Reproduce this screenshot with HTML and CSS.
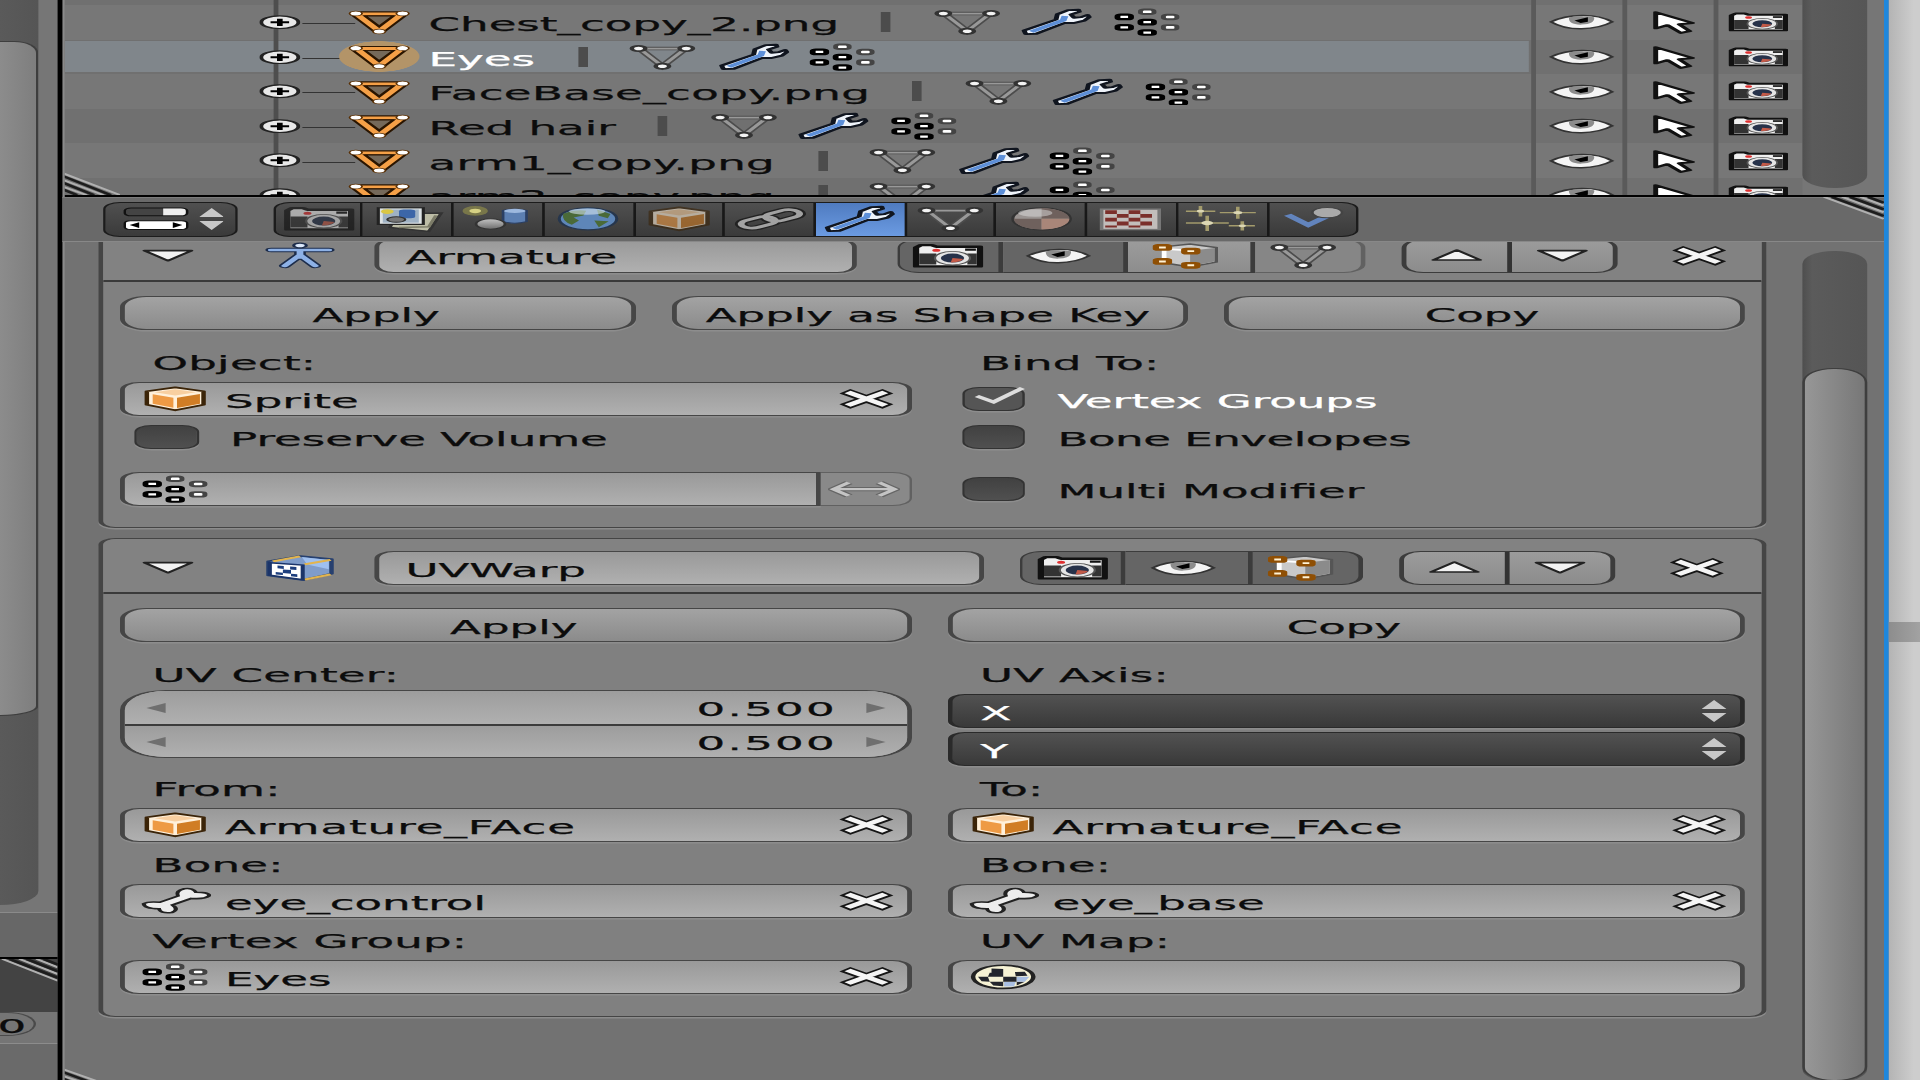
FILE: index.html
```html
<!DOCTYPE html>
<html lang="en">
<head>
    <meta charset="UTF-8">
    <meta name="viewport" content="width=device-width, initial-scale=1.0">
    <title>Modifiers</title>
    <link rel="stylesheet" href="styles.css">
</head>
<body>
    <!-- Icon set -->
    <svg class="icon-defs" width="0" height="0">
        <defs>
            <linearGradient id="ballGrey" x1="0" y1="0" x2="0" y2="1">
                <stop offset="0" stop-color="#c4c4c4"/>
                <stop offset="1" stop-color="#6c6c6c"/>
            </linearGradient>
        </defs>
        <symbol id="plus" viewBox="0 0 16 16" preserveAspectRatio="none">
            <ellipse cx="8" cy="8" rx="7.2" ry="7" fill="#e8e8e8" stroke="#222" stroke-width="1.5"/>
            <path d="M4.4 8H11.6M8 4V12" stroke="#000" stroke-width="2.2"/>
        </symbol>
        <symbol id="mesh" viewBox="0 0 16 16" preserveAspectRatio="none">
            <path d="M2.9 3.4H13.1L8 13.4Z" fill="none" stroke="#2a1500" stroke-width="3" stroke-linejoin="round"/>
            <path d="M2.9 3.4H13.1L8 13.4Z" fill="none" stroke="#f5a047" stroke-width="1.6"/>
            <path d="M5 4.6H11L8 10.4Z" fill="#75695a" stroke="#2a1500" stroke-width=".5"/>
            <g fill="#fff" stroke="#5a3005" stroke-width=".4"><circle cx="2.8" cy="3.2" r="1.4"/><circle cx="13.2" cy="3.2" r="1.4"/><circle cx="8" cy="13.6" r="1.4"/></g>
        </symbol>
        <symbol id="mesh-data" viewBox="0 0 16 16" preserveAspectRatio="none">
            <path d="M2.9 3.2H13.1L8 13.4Z" fill="none" stroke="#4c4c4c" stroke-width="2.1"/>
            <path d="M2.9 3.2H13.1L8 13.4Z" fill="none" stroke="#999" stroke-width="1"/>
            <g fill="#f4f4f4" stroke="#333" stroke-width="1"><circle cx="2.7" cy="3.2" r="1.5"/><circle cx="13.3" cy="3.2" r="1.5"/><circle cx="8" cy="13.4" r="1.5"/></g>
        </symbol>
        <symbol id="wrench" viewBox="0 0 16 16" preserveAspectRatio="none">
            <path d="M.9 13 8 6.7 8.3 3.6 10.7 1.2 13 1 13.2 2.2 11.3 3.7 12 5.6 13.6 5.3 15 4 15.4 5.2 14.3 7.3 12 8.7 9.8 8.7 3.6 14.9 1.3 15.1Z" fill="#eef3fa" stroke="#10151f" stroke-width="1.1" stroke-linejoin="round"/>
            <path d="M2.5 13.7 9.6 7.1 10 4.6" fill="none" stroke="#5d8fd8" stroke-width="1.5"/>
        </symbol>
        <symbol id="group" viewBox="0 0 16 16" preserveAspectRatio="none">
            <g fill="#fff" stroke="#444" stroke-width="1.1"><rect x="6.5" y=".9" width="3" height="2.6" rx=".8"/><rect x="11.6" y="3.9" width="3" height="2.6" rx=".8"/><rect x="11.6" y="9.9" width="3" height="2.6" rx=".8"/></g>
            <g fill="#fff" stroke="#000" stroke-width="1.3"><rect x="1.4" y="3.9" width="3" height="2.6" rx=".7"/><rect x="1.4" y="9.9" width="3" height="2.6" rx=".7"/><rect x="6.5" y="6.9" width="3" height="2.6" rx=".7"/><rect x="6.5" y="12.9" width="3" height="2.6" rx=".7"/></g>
        </symbol>
        <symbol id="eye" viewBox="0 0 16 16" preserveAspectRatio="none">
            <path d="M1.2 8Q4 4.5 8 4.3T14.8 8Q12 11.8 8 12T1.2 8Z" fill="#f4f4f4" stroke="#333" stroke-width=".8"/>
            <path d="M5.2 5.4Q8 4 10.8 5.4Q11 9.4 8 9.6T5.2 5.4Z" fill="#8c8c8c"/>
            <path d="M6.4 7.2 9.4 5.4 9.4 8 7.8 8.6Z" fill="#000"/>
        </symbol>
        <symbol id="cursor" viewBox="0 0 16 16" preserveAspectRatio="none">
            <path d="M4.2 2.4V11.8L6.8 9.9 9.8 14.4 11.8 13.4 9.4 9.4 12.4 8.7Z" fill="#fff" stroke="#111" stroke-width="1.1" stroke-linejoin="round"/>
        </symbol>
        <symbol id="camera" viewBox="0 0 16 16" preserveAspectRatio="none">
            <path d="M.9 3.2 2 1.8H4.4L5.4 2.7H15.1V14.1H.9Z" fill="#efefef" stroke="#111" stroke-width="1.4" stroke-linejoin="round"/>
            <path d="M1.6 6.6H5.4V13H1.6ZM12.3 6.6H14.4V13H12.3Z" fill="#333"/>
            <path d="M11.8 3.8H14.2V5H11.8Z" fill="#111"/>
            <circle cx="5.4" cy="4.8" r=".9" fill="#e03030"/>
            <circle cx="9" cy="9.3" r="3.9" fill="#e5e5e5" stroke="#555" stroke-width=".5"/>
            <circle cx="9" cy="9.3" r="2.6" fill="#27324a"/>
            <path d="M9 9.3 11.4 9.8Q10.8 11.8 8.6 11.8Z" fill="#c25a48"/>
        </symbol>
        <symbol id="layers" viewBox="0 0 16 16" preserveAspectRatio="none">
            <path d="M5.5 5 15.4 4.6 12.6 15.2 4 13Z" fill="#bdbda6" stroke="#333" stroke-width=".8"/>
            <path d="M6 13 12.6 12.6 14.2 6" fill="none" stroke="#7c7c68" stroke-width=".8"/>
            <rect x="1.4" y="1.6" width="10" height="9.6" fill="#dde2e4" stroke="#222" stroke-width=".7"/>
            <rect x="2.4" y="2.6" width="8" height="7.6" fill="#9fb2c4"/>
            <rect x="6" y="2.6" width="3.6" height="5" rx="1" fill="#3c66a8"/>
            <circle cx="3.4" cy="3.8" r="1.4" fill="#d9c746"/>
            <ellipse cx="5.4" cy="8.4" rx="2" ry="1.6" fill="#777" stroke="#333" stroke-width=".5"/>
        </symbol>
        <symbol id="scene" viewBox="0 0 16 16" preserveAspectRatio="none">
            <circle cx="3.2" cy="3.4" r="2.8" fill="#8d8a4a" opacity=".7"/><circle cx="3.2" cy="3.4" r="1.3" fill="#d6d184"/>
            <path d="M9.4 3.2Q12 1.6 14.6 3.2V9.6Q12 11.4 9.4 9.6Z" fill="#5c7fb2" stroke="#2b3f63" stroke-width=".6"/>
            <ellipse cx="12" cy="3.4" rx="2.4" ry="1.2" fill="#9db8de"/>
            <ellipse cx="6.6" cy="11" rx="3.2" ry="3" fill="url(#ballGrey)" stroke="#333" stroke-width=".6"/>
        </symbol>
        <symbol id="world" viewBox="0 0 16 16" preserveAspectRatio="none">
            <circle cx="8" cy="8" r="6.4" fill="#5e86b8" stroke="#26364d" stroke-width=".7"/>
            <path d="M2.5 5Q5 2.5 7.6 3.3L7 6 4.8 7.2 6 9 4.4 11.4Q2 9 2.5 5ZM10 2.6 13 5.2 12.4 7.6 10.4 6.2ZM9.4 9 12.6 9.4 10.4 12.8Z" fill="#4a6a38"/>
            <ellipse cx="7.8" cy="3.8" rx="4" ry="1.8" fill="#d6e4ef" opacity=".6"/>
        </symbol>
        <symbol id="cube" viewBox="0 0 16 16" preserveAspectRatio="none">
            <path d="M8 1.4 14.3 3.6V11.4L8 14.6 1.7 11.4V3.6Z" fill="#fff0da" stroke="#3b2408" stroke-width="1" stroke-linejoin="round"/>
            <path d="M3 5.4 7.6 7.4V13.2L3 10.9Z" fill="#ee9a44"/>
            <path d="M8.4 7.4 13.5 5.2V10.8L8.4 13.3Z" fill="#d07d25"/>
            <path d="M3.4 4.2 8 2.5 12.6 4.2 8 6.1Z" fill="#f8cfa0"/>
        </symbol>
        <symbol id="chain" viewBox="0 0 16 16" preserveAspectRatio="none">
            <g fill="none" stroke="#222" stroke-width="2.8"><rect x="1.2" y="7.6" width="8.2" height="4.8" rx="2.4" transform="rotate(-34 5.3 10)"/><rect x="6.6" y="3.6" width="8.2" height="4.8" rx="2.4" transform="rotate(-34 10.7 6)"/></g>
            <g fill="none" stroke="#a2a2a2" stroke-width="1.5"><rect x="1.2" y="7.6" width="8.2" height="4.8" rx="2.4" transform="rotate(-34 5.3 10)"/><rect x="6.6" y="3.6" width="8.2" height="4.8" rx="2.4" transform="rotate(-34 10.7 6)"/></g>
        </symbol>
        <symbol id="material" viewBox="0 0 16 16" preserveAspectRatio="none">
            <circle cx="8" cy="8" r="6.4" fill="#9a9492" stroke="#333" stroke-width=".7"/>
            <path d="M8 8V1.8A6.2 6.2 0 0 1 14.2 8ZM8 8V14.2A6.2 6.2 0 0 1 1.8 8Z" fill="#6f615d"/>
            <path d="M8 8H14.2A6.2 6.2 0 0 1 8 14.2Z" fill="#a98679"/>
            <ellipse cx="6.6" cy="4.6" rx="3.8" ry="2.2" fill="#ddd" opacity=".5"/>
        </symbol>
        <symbol id="texture" viewBox="0 0 16 16" preserveAspectRatio="none">
            <rect x="1.6" y="2.4" width="12.8" height="11.8" fill="#c2bdbb" stroke="#777" stroke-width=".8"/>
            <path d="M2.4 3H5V5.2H2.4ZM7.6 3H10.2V5.2H7.6ZM5 5.2H7.6V7.4H5ZM10.2 5.2H12.8V7.4H10.2ZM2.4 7.4H5V9.6H2.4ZM7.6 7.4H10.2V9.6H7.6ZM5 9.6H7.6V11.8H5ZM10.2 9.6H12.8V11.8H10.2ZM2.4 11.8H5V13H2.4ZM7.6 11.8H10.2V13H7.6Z" fill="#7b2f2b"/>
        </symbol>
        <symbol id="particles" viewBox="0 0 16 16" preserveAspectRatio="none">
            <g stroke="#a39b6c" stroke-width=".8"><path d="M0 3.6H6.6M3.3 .6V6.6M7.6 4.4H15.6M11.6 1V8M0 10.4H9.6M4.8 6.2V15M9.6 12H15.4M12.6 9.4V14.8"/></g>
            <g fill="#dcd7b4"><circle cx="3.3" cy="3.6" r=".8"/><circle cx="11.6" cy="4.4" r="1"/><circle cx="4.8" cy="10.4" r="1.3"/><circle cx="12.6" cy="12" r=".8"/></g>
        </symbol>
        <symbol id="physics" viewBox="0 0 16 16" preserveAspectRatio="none">
            <path d="M2.4 5.6 7 11.6 12 5.4" fill="none" stroke="#6284bd" stroke-width="2"/>
            <ellipse cx="11.2" cy="4.4" rx="3.3" ry="3" fill="#aaa" stroke="#444" stroke-width=".6"/>
        </symbol>
        <symbol id="tri-down" viewBox="0 0 16 16" preserveAspectRatio="none">
            <path d="M2.8 5H13.2L8 10.8Z" fill="#f2f2f2" stroke="#222" stroke-width=".9" stroke-linejoin="round"/>
        </symbol>
        <symbol id="tri-up" viewBox="0 0 16 16" preserveAspectRatio="none">
            <path d="M2.8 10.4H13.2L8 4.6Z" fill="#f2f2f2" stroke="#222" stroke-width=".9" stroke-linejoin="round"/>
        </symbol>
        <symbol id="close" viewBox="0 0 16 16" preserveAspectRatio="none">
            <path d="M3.2 3.6 12.8 12.4M12.8 3.6 3.2 12.4" stroke="#151515" stroke-width="3.6"/>
            <path d="M3.8 4.1 12.2 11.9M12.2 4.1 3.8 11.9" stroke="#f5f5f5" stroke-width="2"/>
        </symbol>
        <symbol id="armature" viewBox="0 0 16 16" preserveAspectRatio="none">
            <g fill="none" stroke="#1d2d4b" stroke-width="2.6" stroke-linecap="round" stroke-linejoin="round"><path d="M1.6 4.6H14.4M8 4.6V8M4.6 13.8 8 7.4 11.4 13.8"/></g>
            <g fill="none" stroke="#8db1e6" stroke-width="1.5" stroke-linecap="round" stroke-linejoin="round"><path d="M1.6 4.6H14.4M8 4.6V9M4.6 13.8 8 7.4 11.4 13.8"/></g>
            <circle cx="8" cy="2" r="1.4" fill="#dce9fb" stroke="#1d2d4b" stroke-width=".7"/>
        </symbol>
        <symbol id="uvwarp" viewBox="0 0 16 16" preserveAspectRatio="none">
            <path d="M1 4.2 8 1.2 15 3V11.4L8.6 15 1 12.4Z" fill="#7f9cca" stroke="#27406f" stroke-width="1" stroke-linejoin="round"/>
            <path d="M8.4 1.8 14.4 3.4V8.8L9.6 6Z" fill="#9fc0f0"/>
            <path d="M2 4.2 8 1.4M9 6 14.8 3.4M9 14.8 14.8 11.8" stroke="#e2b44e" stroke-width="1.1"/>
            <path d="M1.3 5 8.6 6.4V14.8L1.3 12.2Z" fill="#fff" stroke="#1b3469" stroke-width=".9"/>
            <path d="M3 6.6 4.4 6.9V8.6L3 8.3ZM5.8 7.2 7.2 7.5V9.2L5.8 8.9ZM4.2 8.9 6 9.3V11.4L4.2 11ZM2.6 10.4 4.2 10.8V12.2L2.6 11.8ZM6 11.4 7.4 11.7V13.3L6 12.9Z" fill="#1e3f7e"/>
        </symbol>
        <symbol id="editcage" viewBox="0 0 16 16" preserveAspectRatio="none">
            <path d="M3 2.8 9 1.2 14.8 3.2V11.6L9 14.4 3 12Z" fill="#c9c9c9" stroke="#555" stroke-width=".8"/>
            <path d="M9 5 14.4 3.4V11.3L9 14Z" fill="#8b8b8b"/>
            <path d="M3.2 4.2V11.6M3.2 4 9.4 5" stroke="#fff" stroke-width="1.1"/>
            <g fill="#fff3d6" stroke="#8f4f04" stroke-width="1.4"><rect x="1.4" y="1.9" width="2.9" height="2.5" rx=".4"/><rect x="1.4" y="10" width="2.9" height="2.5" rx=".4"/><rect x="7.7" y="4" width="2.9" height="2.5" rx=".4"/><rect x="7.7" y="12.2" width="2.9" height="2.5" rx=".4"/></g>
        </symbol>
        <symbol id="bone" viewBox="0 0 16 16" preserveAspectRatio="none">
            <path d="M1 9.6Q2 8.2 4.6 8.8L8.6 5.2Q8 2.2 10 1Q12 .4 12.6 3Q15.6 3 15.6 5Q14.6 7.2 11.6 6.6L7.4 10.4Q9 13 7.2 14.8Q4.6 15.4 4.4 12.6Q1 12.6 1 9.6Z" fill="#ededed" stroke="#222" stroke-width=".9"/>
        </symbol>
        <symbol id="uvmap" viewBox="0 0 16 16" preserveAspectRatio="none">
            <circle cx="8" cy="8" r="6.7" fill="#f6f2d4" stroke="#222" stroke-width="1"/>
            <path d="M5.4 3.2 8 3.4V5.4L5.4 5.6ZM10.6 5.2 12.8 5 13.4 7.4 10.8 7.6ZM5 5.6 8 5.4V8H4.6ZM8 8H11V10.8H8ZM2.4 8H4.6L5 10.8 3.2 10.6ZM5 10.8 8 10.8V13.4L5.8 13ZM11 10.8H12.8L11 13Z" fill="#23252c"/>
            <path d="M11 8H13.8L12.8 10.8H11ZM8.2 11H10.8L10.4 13.6H8.2Z" fill="#a9bfe2"/>
        </symbol>
        <symbol id="swap" viewBox="0 0 16 16" preserveAspectRatio="none">
            <path d="M4.6 4.4 1.2 8.2 4.6 12M11.4 4.4 14.8 8.2 11.4 12M1.6 8.2H14.4" fill="none" stroke="#666" stroke-width="2.4"/>
            <path d="M4.6 4.4 1.2 8.2 4.6 12M11.4 4.4 14.8 8.2 11.4 12M1.6 8.2H14.4" fill="none" stroke="#c4c4c4" stroke-width="1.3"/>
        </symbol>
        <symbol id="updown" viewBox="0 0 10 22" preserveAspectRatio="none">
            <path d="M0 9 5 0 10 9ZM0 13 5 22 10 13Z" fill="#c8c8c8"/>
        </symbol>
        <symbol id="props" viewBox="0 0 28 24" preserveAspectRatio="none">
            <rect x="1" y="1" width="26" height="8" rx="2.6" fill="#444" stroke="#111"/>
            <path d="M17 1.6H24.4Q26.4 1.6 26.4 4V6Q26.4 8.4 24.4 8.4H17Z" fill="#eee"/>
            <rect x="1" y="14" width="26" height="9" rx="2.4" fill="#fff" stroke="#111"/>
            <path d="M7 15.5V21.5L3 18.5ZM21 15.5V21.5L25 18.5Z" fill="#000"/>
        </symbol>
        <symbol id="corner-left" viewBox="0 0 24 24" preserveAspectRatio="none">
            <path d="M0 1 24 24M0 8 17 24M0 15 10 24" stroke="#b0b0b0" stroke-width="1.6"/>
            <path d="M0 4 20 24M0 11 13 24M0 18 6 24" stroke="#1c1c1c" stroke-width="2"/>
        </symbol>
        <symbol id="corner-right" viewBox="0 0 24 24" preserveAspectRatio="none">
            <path d="M1 0 24 23M8 0 24 16M15 0 24 9" stroke="#b0b0b0" stroke-width="1.6"/>
            <path d="M4 0 24 20M11 0 24 13M18 0 24 6" stroke="#1c1c1c" stroke-width="2"/>
        </symbol>
    </svg>

    <div class="screen">
        <!-- Neighbouring editor -->
        <div class="side">
            <div class="side-view">
                <div class="side-trough"><div class="side-thumb"></div></div>
            </div>
            <div class="side-header"></div>
            <div class="side-timeline"><svg class="side-corner"><use href="#corner-right"/></svg></div>
            <div class="side-number"><span>0</span></div>
            <div class="side-footer"></div>
        </div>

        <div class="editor">
            <!-- Outliner -->
            <div class="outliner">
                <div class="tree">
                    <div class="row dark"><div class="item"></div><div class="col"></div><div class="col"></div><div class="col"></div></div>
                    <div class="row">
                        <div class="item"><svg class="expander"><use href="#plus"/></svg><i class="branch"></i><svg class="icon"><use href="#mesh"/></svg><span class="name">Chest_copy_2.png</span><i class="bar"></i><svg class="icon"><use href="#mesh-data"/></svg><svg class="icon"><use href="#wrench"/></svg><svg class="icon"><use href="#group"/></svg></div>
                        <div class="col"><svg class="icon"><use href="#eye"/></svg></div><div class="col"><svg class="icon pick"><use href="#cursor"/></svg></div><div class="col"><svg class="icon cam"><use href="#camera"/></svg></div>
                    </div>
                    <div class="row dark selected">
                        <div class="item"><svg class="expander"><use href="#plus"/></svg><i class="branch"></i><svg class="icon"><use href="#mesh"/></svg><span class="name">Eyes</span><i class="bar"></i><svg class="icon"><use href="#mesh-data"/></svg><svg class="icon"><use href="#wrench"/></svg><svg class="icon"><use href="#group"/></svg></div>
                        <div class="col"><svg class="icon"><use href="#eye"/></svg></div><div class="col"><svg class="icon pick"><use href="#cursor"/></svg></div><div class="col"><svg class="icon cam"><use href="#camera"/></svg></div>
                    </div>
                    <div class="row">
                        <div class="item"><svg class="expander"><use href="#plus"/></svg><i class="branch"></i><svg class="icon"><use href="#mesh"/></svg><span class="name loose">FaceBase_copy.png</span><i class="bar"></i><svg class="icon"><use href="#mesh-data"/></svg><svg class="icon"><use href="#wrench"/></svg><svg class="icon"><use href="#group"/></svg></div>
                        <div class="col"><svg class="icon"><use href="#eye"/></svg></div><div class="col"><svg class="icon pick"><use href="#cursor"/></svg></div><div class="col"><svg class="icon cam"><use href="#camera"/></svg></div>
                    </div>
                    <div class="row dark">
                        <div class="item"><svg class="expander"><use href="#plus"/></svg><i class="branch"></i><svg class="icon"><use href="#mesh"/></svg><span class="name">Red hair</span><i class="bar"></i><svg class="icon"><use href="#mesh-data"/></svg><svg class="icon"><use href="#wrench"/></svg><svg class="icon"><use href="#group"/></svg></div>
                        <div class="col"><svg class="icon"><use href="#eye"/></svg></div><div class="col"><svg class="icon pick"><use href="#cursor"/></svg></div><div class="col"><svg class="icon cam"><use href="#camera"/></svg></div>
                    </div>
                    <div class="row">
                        <div class="item"><svg class="expander"><use href="#plus"/></svg><i class="branch"></i><svg class="icon"><use href="#mesh"/></svg><span class="name loose">arm1_copy.png</span><i class="bar"></i><svg class="icon"><use href="#mesh-data"/></svg><svg class="icon"><use href="#wrench"/></svg><svg class="icon"><use href="#group"/></svg></div>
                        <div class="col"><svg class="icon"><use href="#eye"/></svg></div><div class="col"><svg class="icon pick"><use href="#cursor"/></svg></div><div class="col"><svg class="icon cam"><use href="#camera"/></svg></div>
                    </div>
                    <div class="row dark">
                        <div class="item"><svg class="expander"><use href="#plus"/></svg><i class="branch"></i><svg class="icon"><use href="#mesh"/></svg><span class="name loose">arm2_copy.png</span><i class="bar"></i><svg class="icon"><use href="#mesh-data"/></svg><svg class="icon"><use href="#wrench"/></svg><svg class="icon"><use href="#group"/></svg></div>
                        <div class="col"><svg class="icon"><use href="#eye"/></svg></div><div class="col"><svg class="icon pick"><use href="#cursor"/></svg></div><div class="col"><svg class="icon cam"><use href="#camera"/></svg></div>
                    </div>
                </div>
                <div class="outliner-scroll"></div>
                <svg class="corner-bl"><use href="#corner-left"/></svg>
            </div>

            <!-- Properties header -->
            <div class="header">
                <div class="editor-type"><svg class="props"><use href="#props"/></svg><svg class="updown"><use href="#updown"/></svg></div>
                <div class="tabs">
                    <div class="tab"><svg class="icon dim"><use href="#camera"/></svg></div>
                    <div class="tab"><svg class="icon"><use href="#layers"/></svg></div>
                    <div class="tab"><svg class="icon"><use href="#scene"/></svg></div>
                    <div class="tab"><svg class="icon"><use href="#world"/></svg></div>
                    <div class="tab"><svg class="icon dim"><use href="#cube"/></svg></div>
                    <div class="tab"><svg class="icon"><use href="#chain"/></svg></div>
                    <div class="tab active"><svg class="icon"><use href="#wrench"/></svg></div>
                    <div class="tab"><svg class="icon"><use href="#mesh-data"/></svg></div>
                    <div class="tab"><svg class="icon"><use href="#material"/></svg></div>
                    <div class="tab"><svg class="icon"><use href="#texture"/></svg></div>
                    <div class="tab"><svg class="icon"><use href="#particles"/></svg></div>
                    <div class="tab"><svg class="icon"><use href="#physics"/></svg></div>
                </div>
                <svg class="corner-tr"><use href="#corner-right"/></svg>
            </div>

            <!-- Modifier stack -->
            <div class="properties">
                <div class="stack">
                    <div class="panel panel-armature">
                        <div class="panel-header">
                            <svg class="icon fold"><use href="#tri-down"/></svg>
                            <svg class="icon kind"><use href="#armature"/></svg>
                            <div class="field title">Armature</div>
                            <div class="toggles">
                                <div class="toggle narrow"><svg class="icon"><use href="#camera"/></svg></div>
                                <div class="toggle"><svg class="icon"><use href="#eye"/></svg></div>
                                <div class="toggle off"><svg class="icon"><use href="#editcage"/></svg></div>
                                <div class="toggle last disabled"><svg class="icon"><use href="#mesh-data"/></svg></div>
                            </div>
                            <div class="movers"><div><svg class="icon"><use href="#tri-up"/></svg></div><div><svg class="icon"><use href="#tri-down"/></svg></div></div>
                            <svg class="icon remove"><use href="#close"/></svg>
                        </div>
                        <div class="panel-body">
                            <div class="buttons">
                                <div class="button">Apply</div>
                                <div class="button">Apply as Shape Key</div>
                                <div class="button">Copy</div>
                            </div>
                            <div class="columns">
                                <div class="column">
                                    <div class="label">Object:</div>
                                    <div class="field"><svg class="icon"><use href="#cube"/></svg><span>Sprite</span><svg class="icon clear"><use href="#close"/></svg></div>
                                    <div class="check"><i class="box"></i><span>Preserve Volume</span></div>
                                    <div class="joined spaced">
                                        <div class="field"><svg class="icon"><use href="#group"/></svg></div>
                                        <div class="invert"><svg class="icon"><use href="#swap"/></svg></div>
                                    </div>
                                </div>
                                <div class="column">
                                    <div class="label">Bind To:</div>
                                    <div class="check on"><i class="box"><svg class="tick" viewBox="0 0 26 24" preserveAspectRatio="none"><path d="M6 9 13 15 25 1" fill="none" stroke="#ddd" stroke-width="2.8"/></svg></i><span>Vertex Groups</span></div>
                                    <div class="check"><i class="box"></i><span class="tight">Bone Envelopes</span></div>
                                    <div class="check spaced"><i class="box"></i><span>Multi Modifier</span></div>
                                </div>
                            </div>
                        </div>
                    </div>

                    <div class="panel panel-uvwarp">
                        <div class="panel-header">
                            <svg class="icon fold"><use href="#tri-down"/></svg>
                            <svg class="icon kind"><use href="#uvwarp"/></svg>
                            <div class="field title wide">UVWarp</div>
                            <div class="toggles">
                                <div class="toggle narrow"><svg class="icon"><use href="#camera"/></svg></div>
                                <div class="toggle"><svg class="icon"><use href="#eye"/></svg></div>
                                <div class="toggle last"><svg class="icon"><use href="#editcage"/></svg></div>
                            </div>
                            <div class="movers"><div><svg class="icon"><use href="#tri-up"/></svg></div><div><svg class="icon"><use href="#tri-down"/></svg></div></div>
                            <svg class="icon remove"><use href="#close"/></svg>
                        </div>
                        <div class="panel-body">
                            <div class="columns">
                                <div class="column"><div class="button">Apply</div></div>
                                <div class="column"><div class="button">Copy</div></div>
                            </div>
                            <div class="columns">
                                <div class="column">
                                    <div class="label">UV Center:</div>
                                    <div class="numbers">
                                        <div class="number"><i class="dec"></i><span>0.500</span><i class="inc"></i></div>
                                        <div class="number"><i class="dec"></i><span>0.500</span><i class="inc"></i></div>
                                    </div>
                                </div>
                                <div class="column">
                                    <div class="label">UV Axis:</div>
                                    <div class="menu">X<svg class="updown"><use href="#updown"/></svg></div>
                                    <div class="menu">Y<svg class="updown"><use href="#updown"/></svg></div>
                                </div>
                            </div>
                            <div class="columns targets">
                                <div class="column">
                                    <div class="label">From:</div>
                                    <div class="field"><svg class="icon"><use href="#cube"/></svg><span class="loose">Armature_FAce</span><svg class="icon clear"><use href="#close"/></svg></div>
                                    <div class="label">Bone:</div>
                                    <div class="field"><svg class="icon"><use href="#bone"/></svg><span>eye_control</span><svg class="icon clear"><use href="#close"/></svg></div>
                                    <div class="label">Vertex Group:</div>
                                    <div class="field"><svg class="icon"><use href="#group"/></svg><span>Eyes</span><svg class="icon clear"><use href="#close"/></svg></div>
                                </div>
                                <div class="column">
                                    <div class="label">To:</div>
                                    <div class="field"><svg class="icon"><use href="#cube"/></svg><span class="loose">Armature_FAce</span><svg class="icon clear"><use href="#close"/></svg></div>
                                    <div class="label">Bone:</div>
                                    <div class="field"><svg class="icon"><use href="#bone"/></svg><span>eye_base</span><svg class="icon clear"><use href="#close"/></svg></div>
                                    <div class="label">UV Map:</div>
                                    <div class="field"><svg class="icon"><use href="#uvmap"/></svg></div>
                                </div>
                            </div>
                        </div>
                    </div>
                </div>
                <div class="scroll"><div class="scroll-thumb"></div></div>
                <svg class="corner-bottom"><use href="#corner-left"/></svg>
            </div>
        </div>
        <div class="window-edge"></div>
        <div class="desktop"><div class="desktop-band"></div></div>
    </div>
</body>
</html>
```
FILE: styles.css
```css
* {
    box-sizing: border-box;
}
body {
    margin: 0;
    width: 1920px;
    height: 1080px;
    overflow: hidden;
    background: #727272;
}
.icon-defs {
    position: absolute;
}
/* the interface is laid out 800px wide and stretched across the window */
.screen {
    display: flex;
    width: 800px;
    height: 1080px;
    overflow: hidden;
    transform: scaleX(2.4);
    transform-origin: 0 0;
    font-family: "DejaVu Sans", sans-serif;
    font-size: 18.8px;
    color: #0c0c0c;
    -webkit-text-stroke: 0.25px;
    white-space: nowrap;
}
svg {
    display: block;
    flex: none;
}
.icon {
    width: 30px;
    height: 27.7px;
}
.dim {
    opacity: 0.6;
}

/* left editor */
.side {
    display: flex;
    flex-direction: column;
    width: 24.4px;
    flex: none;
}
.side-view {
    height: 913px;
    background: #767676;
    border-bottom: 1px solid #8a8a8a;
}
.side-trough {
    width: 16.4px;
    height: 905px;
    padding-top: 41px;
    background: linear-gradient(to right, #5a5a5a, #555);
    border-radius: 0 0 16px 0 / 0 0 14px 0;
}
.side-thumb {
    height: 675px;
    background: linear-gradient(to right, #8c8c8c, #7e7e7e);
    border: 1px solid #3e3e3e;
    border-width: 1px 1.6px 1.6px 0;
    border-radius: 0 10px 16px 0 / 0 12px 10px 0;
}
.side-header {
    height: 46px;
    background: #676767;
    border-bottom: 2px solid #000;
}
.side-timeline {
    height: 53px;
    background: #434343;
}
.side-corner {
    width: 24.4px;
    height: 23px;
}
.side-number {
    height: 32px;
    background: #757575;
    border-bottom: 1px solid #8c8c8c;
}
.side-number span {
    display: block;
    width: 14.6px;
    height: 24px;
    padding-top: 2px;
    line-height: 24px;
    text-indent: -1px;
    border: 1px solid #4a4a4a;
    border-left: 0;
    border-radius: 0 12px 12px 0;
}
.side-footer {
    flex: 1;
    background: #6a6a6a;
}

/* main editor column */
.editor {
    display: flex;
    flex-direction: column;
    flex: none;
    width: 760.3px;
    border-left: 2px solid #000;
    box-shadow: inset 1px 0 #8a8a8a;
}

/* outliner */
.outliner {
    position: relative;
    display: flex;
    height: 197px;
    overflow: hidden;
    margin-left: 1px;
    background: #767676;
    border-bottom: 2px solid #000;
}
.tree {
    width: 724px;
    margin-top: -29.6px;
}
.row {
    display: flex;
    height: 34.6px;
    background: #777;
}
.row.dark {
    background: #707070;
}
.item {
    display: flex;
    align-items: center;
    width: 611px;
    padding-left: 81px;
    background: linear-gradient(#4e4e4e, #4e4e4e) 87px 0 / 2px 100% no-repeat;
}
.selected .item {
    background: linear-gradient(#4e4e4e, #4e4e4e) 87px 0 / 2px 100% no-repeat, linear-gradient(#80868b, #80868b) 0 1px / 610px 31px no-repeat;
}
.expander {
    width: 17.2px;
    height: 14.6px;
}
.branch {
    width: 22px;
    height: 1px;
    margin: 3px -5px 0 0;
    background: #333;
}
.item .icon {
    position: relative;
    margin-right: 7.6px;
}
.item .branch + .icon {
    margin-right: 6px;
}
.selected .branch + .icon {
    background: radial-gradient(closest-side, #b39468 97%, transparent) center / 34px 31px no-repeat;
    overflow: visible;
    width: 34px;
    height: 31px;
    margin: 0 4px 0 -2px;
    padding: 1.6px 2px;
}
.name {
    padding-top: 5px;
}
.name.loose {
    letter-spacing: 0.15px;
}
.selected .name {
    color: #fff;
}
.bar {
    width: 4px;
    height: 20px;
    margin: 0 16.5px 0 17.6px;
    background: #4c4c4c;
}
.col {
    display: flex;
    align-items: center;
    width: 37.7px;
    padding-left: 3.2px;
    border-left: 2px solid #5a5a5a;
}
.pick {
    margin-left: 0.8px;
}
.cam {
    width: 25.4px;
    height: 22px;
    margin-left: 1px;
}
.outliner-scroll {
    width: 26.4px;
    height: 188px;
    background: linear-gradient(to right, #505050, #5b5b5b 15%, #565656);
    border-radius: 0 0 13px 13px;
}
.corner-bl {
    position: absolute;
    left: -1px;
    bottom: 0;
    width: 24px;
    height: 23px;
}

/* header with the context tabs */
.header {
    position: relative;
    display: flex;
    align-items: center;
    height: 45px;
    padding: 0 0 0 16.6px;
    background: #696969;
    border-bottom: 1px solid #888;
    box-shadow: inset 0 1px #7c7c7c;
}
.editor-type {
    display: flex;
    align-items: center;
    width: 56.4px;
    height: 35px;
    padding-left: 7px;
    gap: 4px;
    border: 1px solid #1c1c1c;
    border-radius: 7px;
    background: linear-gradient(#505050, #3a3a3a);
}
.props {
    width: 28px;
    height: 23.5px;
}
.updown {
    width: 10.4px;
    height: 22px;
}
.tabs {
    display: flex;
    width: 451.8px;
    height: 35px;
    margin-left: 15px;
    border: 1px solid #1c1c1c;
    border-radius: 7px;
    background: #161616;
    overflow: hidden;
}
.tab {
    display: flex;
    flex: none;
    width: 37.72px;
    align-items: center;
    justify-content: center;
    background: linear-gradient(#505050, #3a3a3a);
    border-right: 1.6px solid #181818;
}
.tab:first-child {
    width: 36px;
}
.tab:last-child {
    width: 37px;
    border-right: 0;
}
.tab.active {
    background: linear-gradient(#4f7bc0, #6b9be2);
}
.corner-tr {
    position: absolute;
    right: 0;
    top: 0;
    width: 26px;
    height: 23px;
}

/* properties */
.properties {
    position: relative;
    display: flex;
    flex: 1;
    min-height: 0;
    overflow: hidden;
    margin-left: 1px;
    padding-left: 13.6px;
    background: #727272;
}
.stack {
    width: 695px;
    margin-top: -16px;
}
.panel {
    border: 2px solid #454545;
    border-width: 1.8px 2px;
    border-radius: 7px;
    background: #808080;
    box-shadow: 0 1.5px #8c8c8c;
}
.panel-armature {
    height: 302px;
    margin-bottom: 10.4px;
}
.panel-uvwarp {
    height: 479px;
}
.panel-header {
    display: flex;
    align-items: center;
    position: relative;
    height: 54.8px;
    padding: 5px 0 0 11.8px;
    border-bottom: 2px solid #3a3a3a;
    background: #828282;
    border-radius: 6px 6px 0 0;
}
.panel-header .kind {
    margin-left: 25px;
}
.panel-header .title {
    width: 201.4px;
    margin-left: 16px;
    padding-left: 11.2px;
}
.panel-header .title.wide {
    width: 254.6px;
}
.toggles {
    display: flex;
    height: 34px;
    margin-left: 16.4px;
}
.title.wide + .toggles {
    margin-left: 15px;
}
.toggle {
    display: flex;
    align-items: center;
    justify-content: center;
    width: 52.8px;
    background: #656565;
    border: 1px solid #3c3c3c;
    border-width: 1.6px 2px 1.6px 0;
}
.toggle.narrow {
    width: 44px;
    border-left: 1.6px solid #3c3c3c;
    border-radius: 9px 0 0 9px;
}
.toggle.off {
    background: linear-gradient(#9c9c9c, #8d8d8d);
}
.toggle .icon {
    margin-right: 3px;
}
.toggle.narrow .icon {
    margin-right: 0;
}
.toggle.last {
    width: 46px;
    padding-right: 2px;
    border-radius: 0 9px 9px 0;
}
.toggle.disabled {
    background: #868686;
    border-color: #616161;
}
.movers {
    display: flex;
    width: 90px;
    height: 34px;
    margin-left: 15px;
    border: 2px solid #3c3c3c;
    border-width: 1.6px 2px;
    border-radius: 9px;
    background: linear-gradient(#9c9c9c, #8c8c8c);
}
.movers div {
    display: flex;
    flex: 1;
    align-items: center;
    justify-content: center;
}
.movers div + div {
    border-left: 2px solid #333;
}
.panel-header .remove {
    margin-left: 18.8px;
}
.panel-body {
    padding: 14px 6.8px 0 7.4px;
}
.buttons {
    display: grid;
    grid-template-columns: 214.7px 214.7px 216.7px;
    column-gap: 15.2px;
}
.columns {
    display: grid;
    grid-template-columns: 329.4px 331.6px;
    column-gap: 15.4px;
}
.button {
    height: 34px;
    padding: 3px 2px 0 0;
    line-height: 31px;
    text-align: center;
    border: 2px solid #464646;
    border-width: 1.6px 2px;
    border-radius: 11px;
    background: linear-gradient(#a3a3a3, #8b8b8b);
    box-shadow: 0 1.5px #8d8d8d;
}
.label {
    height: 34px;
    margin-top: 14px;
    padding: 3px 0 0 13.2px;
    line-height: 34px;
    letter-spacing: 0.1px;
}
.field {
    display: flex;
    align-items: center;
    height: 34px;
    padding: 0 2px 0 5.8px;
    border: 2px solid #464646;
    border-width: 1.6px 2px;
    border-radius: 8px;
    background: linear-gradient(#999, #b0b0b0);
    box-shadow: 0 1.5px #8d8d8d;
}
.field.title {
    padding-top: 4px;
}
.field span {
    padding: 5px 0 0 5.6px;
}
.field .loose {
    letter-spacing: 0.4px;
}
.field .clear {
    margin-left: auto;
}
.column .field,
.column .check {
    margin-top: 4px;
}
.field + .label {
    margin-top: 4px;
}
.check {
    display: flex;
    align-items: center;
    height: 34px;
    padding-left: 5.5px;
}
.check span {
    margin-left: 13.2px;
    padding-top: 5px;
}
.check .tight {
    letter-spacing: -0.2px;
}
.check.on span {
    color: #fff;
}
.box {
    width: 26.8px;
    height: 24.6px;
    border: 1.6px solid #333;
    border-radius: 7px;
    background: linear-gradient(#414141, #505050);
    box-shadow: 0 1.5px #8d8d8d;
}
.on .box {
    background: #555;
}
.tick {
    width: 26px;
    height: 24px;
    margin: -1px 0 0 -1px;
    overflow: visible;
}
.column .spaced {
    margin-top: 18px;
}
.joined {
    display: flex;
}
.joined .field {
    flex: 1;
    margin: 0;
    border-radius: 8px 0 0 8px;
}
.invert {
    display: flex;
    align-items: center;
    justify-content: center;
    width: 37.4px;
    padding-right: 2px;
    border: 1.6px solid #616161;
    border-left: 0;
    border-radius: 0 8px 8px 0;
    background: #898989;
}
.numbers {
    height: 68px;
    border: 2px solid #464646;
    border-width: 1.6px 2px;
    border-radius: 19px / 20px;
    background: #a8a8a8;
    overflow: hidden;
}
.number {
    display: flex;
    align-items: center;
    height: 33px;
    padding: 0 9px;
    background: linear-gradient(#9d9d9d, #b0b0b0);
}
.number + .number {
    border-top: 2px solid #3c3c3c;
}
.number span {
    margin-left: auto;
    padding-top: 4px;
    letter-spacing: 0.95px;
}
.dec,
.inc {
    border: 5.6px solid transparent;
}
.dec {
    border-right: 8px solid #6f6f6f;
    border-left: 0;
}
.inc {
    margin-left: 12px;
    border-left: 8px solid #6f6f6f;
    border-right: 0;
}
.menu {
    display: flex;
    align-items: center;
    justify-content: space-between;
    height: 34px;
    margin-top: 4px;
    padding: 4px 5.2px 0 11.4px;
    color: #fff;
    border: 2px solid #2a2a2a;
    border-width: 1.6px 2px;
    border-radius: 7px;
    background: linear-gradient(#525252, #393939);
    box-shadow: 0 1.5px #8d8d8d;
}
.menu .updown {
    margin-top: -4px;
}
.targets .label:first-child {
    margin-top: 4px;
}
.scroll {
    width: 26.4px;
    height: 831px;
    margin: 8.6px 0 0 15.4px;
    padding-top: 117px;
    background: linear-gradient(to right, #4e4e4e, #5b5b5b 15%, #555);
    border-radius: 13px;
}
.scroll-thumb {
    height: 713px;
    border: 1.6px solid #3e3e3e;
    border-radius: 13px / 14px;
    background: linear-gradient(to right, #979797, #777);
}
.corner-bottom {
    position: absolute;
    left: -1px;
    bottom: -11px;
    width: 26px;
    height: 23px;
}

/* window border and what shows beside it */
.window-edge {
    width: 2.4px;
    flex: none;
    background: #1f87dc;
}
.desktop {
    flex: 1;
    padding-top: 622px;
    background: linear-gradient(to right, #b4b4b4, #cdcdcd 80%);
}
.desktop-band {
    height: 20px;
    background: linear-gradient(to right, #8d8d8d, #a2a2a2);
}
```
